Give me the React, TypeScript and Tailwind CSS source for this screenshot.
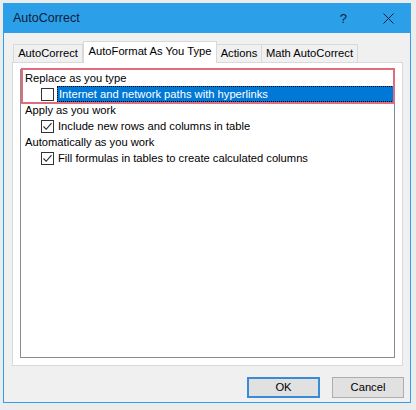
import React from "react";

const font = { fontFamily: "'Liberation Sans', Arial, sans-serif" };

function CheckBox({ checked }: { checked: boolean }) {
  return (
    <div className="w-[13px] h-[13px] border border-[#333333] bg-white flex items-center justify-center shrink-0">
      {checked && (
        <svg width="11" height="11" viewBox="0 0 11 11">
          <path d="M1.5 5.5 L4.2 8.3 L9.5 2.2" fill="none" stroke="#222" strokeWidth="1.1" />
        </svg>
      )}
    </div>
  );
}

export default function App() {
  return (
    <div className="w-[416px] h-[410px] bg-[#ececec] pt-[3px] pl-[3px] text-[11.2px] text-black" style={font}>
      <div className="w-[408px] h-[400px] border border-[#2b9fe8] bg-[#f0f0f0] flex flex-col">
        {/* Title bar */}
        <div className="h-[29px] bg-[#2b9fe8] flex items-center pl-[9px] shrink-0">
          <span className="text-[12.5px] text-[#101c38]">AutoCorrect</span>
          <span className="ml-auto text-[13px] text-[#101c38] mr-[36px]">?</span>
          <svg width="11" height="11" viewBox="0 0 11 11" className="mr-[16px]">
            <path d="M0.5 0.5 L10.5 10.5 M10.5 0.5 L0.5 10.5" stroke="#101c38" strokeWidth="1" />
          </svg>
        </div>
        {/* Tabs */}
        <div className="h-[29px] flex items-end pl-[9px] shrink-0 relative z-10">
          <div className="w-[70px] h-[18px] border border-b-0 border-[#d9d9d9] bg-[#f0f0f0] flex items-center justify-center whitespace-nowrap">
            AutoCorrect
          </div>
          <div className="w-[134px] h-[22px] -mb-[1px] border border-b-0 border-[#d9d9d9] bg-white flex items-center justify-center whitespace-nowrap pb-[2px]">
            AutoFormat As You Type
          </div>
          <div className="w-[45px] h-[18px] border border-b-0 border-l-0 border-[#d9d9d9] bg-[#f0f0f0] flex items-center justify-center whitespace-nowrap">
            Actions
          </div>
          <div className="w-[96px] h-[18px] border border-b-0 border-l-0 border-[#d9d9d9] bg-[#f0f0f0] flex items-center justify-center whitespace-nowrap">
            Math AutoCorrect
          </div>
        </div>
        {/* Panel */}
        <div className="ml-[8px] w-[391px] h-[304px] border border-[#d9d9d9] bg-white pt-[6px] pl-[7px] shrink-0">
          <div className="relative w-[375px] h-[289px] border border-[#8c8c8c] pl-[4px]">
            <div className="h-[16px] flex items-center">Replace as you type</div>
            <div className="h-[16px] flex items-center pl-[16px]">
              <CheckBox checked={false} />
              <div className="ml-[3px] flex-1 h-[16px] bg-[#0078d7] border border-dotted border-black text-white flex items-center pl-[1px]">
                Internet and network paths with hyperlinks
              </div>
            </div>
            <div className="h-[16px] flex items-center">Apply as you work</div>
            <div className="h-[16px] flex items-center pl-[16px]">
              <CheckBox checked={true} />
              <span className="ml-[4px]">Include new rows and columns in table</span>
            </div>
            <div className="h-[16px] flex items-center">Automatically as you work</div>
            <div className="h-[16px] flex items-center pl-[16px]">
              <CheckBox checked={true} />
              <span className="ml-[4px]">Fill formulas in tables to create calculated columns</span>
            </div>
            {/* red annotation frame */}
            <div className="absolute left-[0px] top-[-2px] w-[374px] h-[36px] border-2 border-[#e06c7e] pointer-events-none" />
          </div>
        </div>
        {/* Buttons */}
        <div className="flex justify-end gap-[12px] pr-[6px] pt-[11px]">
          <button className="w-[73px] h-[21px] border-2 border-[#3a8ad6] bg-[#e1e1e1] flex items-center justify-center">
            OK
          </button>
          <button className="w-[72px] h-[21px] border border-[#adadad] bg-[#e1e1e1] flex items-center justify-center">
            Cancel
          </button>
        </div>
      </div>
    </div>
  );
}
